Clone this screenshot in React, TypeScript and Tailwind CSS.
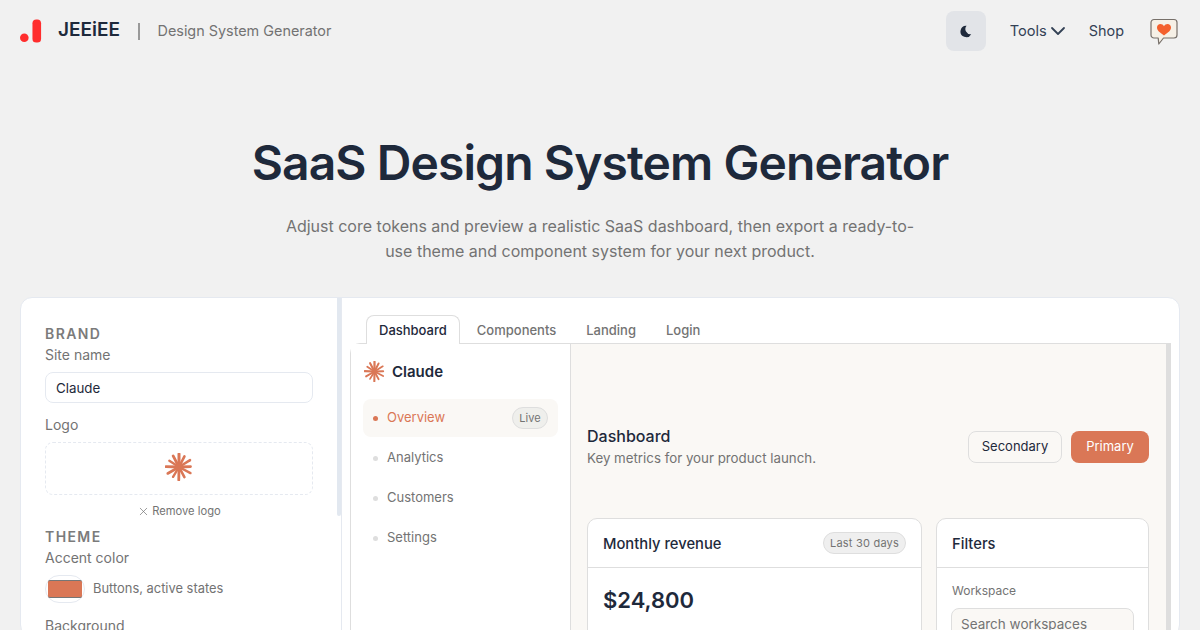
import { ChevronDown, X } from "lucide-react";

const navItems = ["Analytics", "Customers", "Settings"];
const tabs = ["Components", "Landing", "Login"];

function Spark({ className }: { className: string }) {
  const rays = [
    [0, 13, 3],
    [27, 12, 2.6],
    [58, 13, 2.4],
    [88, 11.500, 2.8],
    [118, 13, 2.4],
    [152, 11.500, 2.6],
    [181, 13, 2.8],
    [211, 11.500, 2.4],
    [240, 13, 2.6],
    [272, 13, 2.8],
    [303, 11.500, 2.4],
    [332, 12.500, 2.8],
  ];
  return (
    <svg viewBox="0 0 28 28" className={className}>
      {rays.map(([angle, length, width]) => (
        <line
          key={angle}
          x1="14"
          y1="14"
          x2="14"
          y2={14 - length}
          stroke="#da7756"
          strokeWidth={width}
          strokeLinecap="round"
          transform={`rotate(${angle} 14 14)`}
        />
      ))}
      <circle cx="14" cy="14" r="3.500" fill="#da7756" />
    </svg>
  );
}

function HeartBubble() {
  return (
    <svg viewBox="0 0 28 28" className="h-[28px] w-[28px]">
      <path
        d="M4 1.500h20a3 3 0 0 1 3 3v12.500a3 3 0 0 1-3 3H13.500L8.800 26l-.6-6H4a3 3 0 0 1-3-3V4.500a3 3 0 0 1 3-3z"
        fill="#f6f0e6"
        stroke="#77706a"
        strokeWidth="1.200"
        strokeLinejoin="round"
      />
      <path
        d="M14 17.500c-4.400-3-7-5.100-7-7.900 0-2 1.600-3.500 3.400-3.500 1.500 0 2.800.8 3.600 2.100.8-1.300 2.100-2.100 3.600-2.100 1.800 0 3.400 1.500 3.400 3.500 0 2.800-2.600 4.900-7 7.900z"
        fill="#f4602c"
      />
    </svg>
  );
}

function SectionLabel({ children }: { children: string }) {
  return <h3 className="text-[14px] leading-[17px] font-semibold tracking-[0.1em] text-[#7b7b7b]">{children}</h3>;
}

function FieldLabel({ children }: { children: string }) {
  return <p className="text-[14px] leading-[20px] text-[#737373]">{children}</p>;
}

function Settings() {
  return (
    <aside className="relative h-full w-[321px] shrink-0 border-r border-[#e5e9f0] px-[24px] pt-[27px]">
      <div className="absolute top-0 right-0 h-[218px] w-[4px] rounded-b-sm bg-[#e2e8f0]" />
      <SectionLabel>BRAND</SectionLabel>
      <div className="mt-[3px]">
        <FieldLabel>Site name</FieldLabel>
      </div>
      <div className="mt-[7px] flex h-[31px] w-[268px] items-center rounded-[8px] border border-[#e5e9f0] px-[10px] pt-[2px] text-[13.330px] text-[#1e293b]">
        Claude
      </div>
      <div className="mt-[12px]">
        <FieldLabel>Logo</FieldLabel>
      </div>
      <div className="mt-[7px] flex h-[53px] w-[268px] items-center justify-center rounded-[8px] border border-dashed border-[#e5e9f0] pb-[4px]">
        <Spark className="h-[28px] w-[28px]" />
      </div>
      <div className="mt-[8px] flex w-[268px] items-center justify-center gap-[2px] text-[11.200px] leading-[16px] text-[#737373]">
        <X size={13} strokeWidth={1.300} />
        Remove logo
      </div>
      <div className="mt-[9px]">
        <SectionLabel>THEME</SectionLabel>
      </div>
      <div className="mt-[3px]">
        <FieldLabel>Accent color</FieldLabel>
      </div>
      <div className="mt-[7px] flex items-center gap-[8px]">
        <div className="flex h-[28px] w-[40px] items-center justify-center rounded-[14px] border border-[#e5e9f0]">
          <div className="h-[18px] w-[34px] rounded-[2px] border-y border-[#767676] bg-[#da7756]" />
        </div>
        <span className="text-[12.900px] text-[#737373]">Buttons, active states</span>
      </div>
      <div className="mt-[13px]">
        <FieldLabel>Background</FieldLabel>
      </div>
    </aside>
  );
}

function Sidebar() {
  return (
    <nav className="w-[220px] shrink-0 border-r border-[#dedede] bg-white px-[12px] pt-[16px]">
      <div className="flex h-[22px] items-center gap-[7px] pl-[1px]">
        <Spark className="h-[21px] w-[21px]" />
        <span className="mt-[2px] text-[15px] font-semibold text-[#1e293b]">Claude</span>
      </div>
      <div className="mt-[17px] flex h-[38px] w-[195px] items-center rounded-[8px] bg-[#faf8f5] pr-[10px] pl-[10px]">
        <span className="h-[5px] w-[5px] rounded-full bg-[#da7756]" />
        <span className="ml-[9px] text-[13px] text-[#da7756]">Overview</span>
        <span className="ml-auto flex h-[22px] w-[36px] items-center justify-center rounded-full border border-[#dedede] bg-[#efefec] text-[11px] text-[#737373]">
          Live
        </span>
      </div>
      <div className="mt-[1px]">
        {navItems.map((item) => (
          <div key={item} className="flex h-[40px] items-center pl-[10px] text-[13px] text-[#737373]">
            <span className="h-[5px] w-[5px] rounded-full bg-[#dedede]" />
            <span className="ml-[9px]">{item}</span>
          </div>
        ))}
      </div>
    </nav>
  );
}

function Dashboard() {
  return (
    <main className="min-w-0 flex-1 border-r-[5px] border-[#dedede] bg-[#faf8f5] pt-[82px] pr-[16px] pl-[16px]">
      <div className="flex w-[562px] items-center justify-between">
        <div>
          <h2 className="text-[16px] leading-[20px] font-medium text-[#1e293b]">Dashboard</h2>
          <p className="mt-[3px] text-[13.300px] leading-[18px] text-[#737373]">Key metrics for your product launch.</p>
        </div>
        <div className="flex gap-[9px]">
          <button className="h-[32px] w-[94px] rounded-[8px] border border-[#dedede] bg-[#faf8f5] text-[13px] text-[#1e293b]">
            Secondary
          </button>
          <button className="h-[32px] w-[78px] rounded-[8px] bg-[#da7756] text-[13px] text-white">Primary</button>
        </div>
      </div>
      <div className="mt-[51px] flex gap-[14px]">
        <section className="h-[200px] w-[335px] rounded-[10px] border border-[#dedede] bg-white">
          <div className="flex h-[49px] items-center justify-between border-b border-[#dedede] pr-[15px] pl-[15px]">
            <h3 className="mt-[2px] text-[14.750px] font-medium text-[#1e293b]">Monthly revenue</h3>
            <span className="flex h-[22px] w-[83px] items-center justify-center rounded-full border border-[#dedede] bg-[#efefef] text-[11px] tracking-[0.02em] text-[#737373]">
              Last 30 days
            </span>
          </div>
          <p className="mt-[17px] pl-[15px] text-[22px] leading-[30px] font-semibold text-[#1e293b]">$24,800</p>
        </section>
        <section className="h-[200px] w-[213px] rounded-[10px] border border-[#dedede] bg-white">
          <div className="flex h-[49px] items-center border-b border-[#dedede] pl-[15px]">
            <h3 className="mt-[2px] text-[14.750px] font-medium text-[#1e293b]">Filters</h3>
          </div>
          <p className="mt-[14px] pl-[15px] text-[12px] leading-[18px] text-[#737373]">Workspace</p>
          <div className="mt-[8px] ml-[14px] flex h-[32px] w-[183px] items-center rounded-[8px] border border-[#dedede] bg-[#faf8f5] px-[9px] pt-[1px] text-[13.500px] text-[#737373]">
            Search workspaces
          </div>
        </section>
      </div>
    </main>
  );
}

export default function App() {
  return (
    <div className="h-[630px] w-[1200px] overflow-hidden bg-[#f1f1f1] font-['Inter',sans-serif]">
      <header className="flex h-[62px] items-center px-[20px]">
        <svg viewBox="0 0 24 24" className="h-[24px] w-[23px]">
          <circle cx="4.500" cy="19" r="4.500" fill="#ff2d2d" />
          <rect x="13" y="0" width="9" height="24" rx="4" fill="#ff2d2d" />
        </svg>
        <span className="mb-[1px] ml-[15px] text-[19px] font-semibold text-[#1e293b]">JEEiEE</span>
        <span className="ml-[18px] h-[17px] w-[1.500px] bg-[#999999]" />
        <span className="mb-[1px] ml-[18px] text-[14.400px] text-[#737373]">Design System Generator</span>
        <div className="ml-auto flex items-center">
          <button className="flex h-[40px] w-[40px] items-center justify-center rounded-[8px] bg-[#e2e4e8]">
            <svg viewBox="0 0 24 24" className="h-[13px] w-[13px]">
              <path d="M14 1.500A10.500 10.500 0 1 0 22.500 17 9.500 9.500 0 0 1 14 1.500z" fill="#1e293b" />
            </svg>
          </button>
          <span className="mt-[2px] ml-[24px] text-[14.600px] text-[#334155]">Tools</span>
          <ChevronDown size={24} strokeWidth={1.800} className="-ml-[1px] text-[#334155]" />
          <span className="mb-[1px] ml-[19px] text-[14.400px] text-[#334155]">Shop</span>
          <div className="mt-[2px] mr-[2px] ml-[26px] flex">
            <HeartBubble />
          </div>
        </div>
      </header>

      <section className="pt-[71px] text-center">
        <h1 className="text-[48px] leading-[60px] font-semibold tracking-[-0.019em] text-[#1e293b]">
          SaaS Design System Generator
        </h1>
        <p className="mx-auto mt-[21px] w-[640px] text-[16px] leading-[25px] text-[#737373]">
          Adjust core tokens and preview a realistic SaaS dashboard, then export a ready-to-use theme and component system for your next product.
        </p>
      </section>

      <div className="mx-[20px] mt-[33px] flex h-[340px] overflow-hidden rounded-[12px] border border-[#e5e9f0] bg-white">
        <Settings />
        <div className="min-w-0 flex-1 pt-[17px] pr-[8px] pl-[8px]">
          <div className="flex pl-[16px] text-[13px] font-medium">
            <span className="relative z-10 -mb-px flex h-[29px] items-center rounded-t-[8px] border border-b-0 border-[#dedede] bg-white px-[12px] pt-[1px] text-[#1e293b]">
              Dashboard
            </span>
            <div className="flex">
              {tabs.map((tab) => (
                <span key={tab} className="flex h-[28px] items-center px-[15px] pt-[3px] text-[#737373] first:pl-[17px]">
                  {tab}
                </span>
              ))}
            </div>
          </div>
          <div className="flex h-[300px] rounded-tl-[10px] border-t border-l border-[#dedede]">
            <Sidebar />
            <Dashboard />
          </div>
        </div>
      </div>
    </div>
  );
}
